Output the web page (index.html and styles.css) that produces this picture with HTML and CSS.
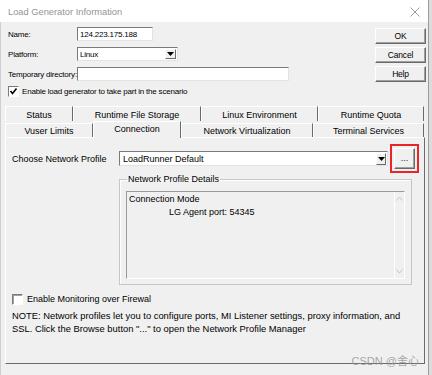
FILE: index.html
```html
<!DOCTYPE html>
<html>
<head>
<meta charset="utf-8">
<link rel="stylesheet" href="styles.css">
</head>
<body>
<div class="screen">
  <div class="win">
    <div class="titlebar">
      <span class="title">Load Generator Information</span>
      <svg class="close" width="10" height="10" viewBox="0 0 10 10"><path d="M0.5 0.5L9.5 9.5M9.5 0.5L0.5 9.5" stroke="#9a9a9a" stroke-width="1" fill="none"/></svg>
    </div>
    <div class="body">
      <div class="top">
        <div class="form">
          <div class="row"><span class="lbl">Name:</span><div class="field f-name">124.223.175.188</div></div>
          <div class="row"><span class="lbl">Platform:</span><div class="field f-plat"><span class="val">Linux</span><span class="ddbtn"><svg width="7" height="4" viewBox="0 0 7 4"><path d="M0 0H7L3.5 4Z" fill="#000"/></svg></span></div></div>
          <div class="row"><span class="lbl">Temporary directory:</span><div class="field f-temp"></div></div>
          <div class="row chkrow"><span class="chk"><svg width="9" height="9" viewBox="0 0 9 9"><path d="M1.5 4L3.5 6.5L7.5 1.5" stroke="#000" stroke-width="1.6" fill="none"/></svg></span><span>Enable load generator to take part in the scenario</span></div>
        </div>
        <div class="btns">
          <div class="btn">OK</div>
          <div class="btn">Cancel</div>
          <div class="btn">Help</div>
        </div>
      </div>
      <div class="tabs">
        <div class="tabrow back">
          <div class="tab t1">Status</div>
          <div class="tab t2">Runtime File Storage</div>
          <div class="tab t3">Linux Environment</div>
          <div class="tab t4">Runtime Quota</div>
        </div>
        <div class="tabrow front">
          <div class="tab t5">Vuser Limits</div>
          <div class="tab t6 sel">Connection</div>
          <div class="tab t7">Network Virtualization</div>
          <div class="tab t8">Terminal Services</div>
        </div>
      </div>
      <div class="panel">
        <div class="choose">
          <span class="clbl">Choose Network Profile</span>
          <div class="combo"><span class="val">LoadRunner Default</span><span class="ddbtn big"><svg width="7" height="4" viewBox="0 0 7 4"><path d="M0 0H7L3.5 4Z" fill="#000"/></svg></span></div>
          <div class="browse-wrap"><div class="browse">...</div></div>
        </div>
        <fieldset class="group">
          <legend>Network Profile Details</legend>
          <div class="details">
            <div class="dtext">
              <div>Connection Mode</div>
              <div class="indent">LG Agent port: 54345</div>
            </div>
            <div class="vscroll">
              <svg width="7" height="5" viewBox="0 0 7 5"><path d="M0.5 4.5L3.5 1L6.5 4.5" stroke="#c4c4c4" fill="none"/></svg>
              <svg width="7" height="5" viewBox="0 0 7 5"><path d="M0.5 0.5L3.5 4L6.5 0.5" stroke="#c4c4c4" fill="none"/></svg>
            </div>
          </div>
        </fieldset>
        <div class="fwrow"><span class="chk2"></span><span>Enable Monitoring over Firewal</span></div>
        <p class="note">NOTE: Network profiles let you to configure ports, MI Listener settings, proxy information, and SSL. Click the Browse button "..." to open the Network Profile Manager</p>
      </div>
    </div>
    <div class="watermark">CSDN @舍心</div>
  </div>
</div>
</body>
</html>
```
FILE: styles.css
```css
html, body { margin: 0; padding: 0; }
body { background: #e6e6e6; width: 432px; height: 375px; overflow: hidden; }
.screen { width: 432px; height: 375px; display: flex; background: #dcdcdc; }
.win { position: relative; width: 428px; height: 375px; background: #f0f0f0; border-right: 1px solid #9c9c9c; display: flex; flex-direction: column; }
.titlebar { height: 22px; background: #fff; display: flex; align-items: center; justify-content: space-between; padding: 1px 8px 0 8px; box-sizing: border-box; flex: none; }
.title { font-family: "Liberation Sans", Arial, sans-serif; font-size: 9.3px; color: #959595; }
.body { flex: 1; border-left: 1px solid #cfcfcf; display: flex; flex-direction: column; font-family: "Liberation Sans", Arial, sans-serif; color: #000; }
.top { height: 84px; display: flex; box-sizing: border-box; padding: 5px 2px 0 7px; font-size: 8px; letter-spacing: -0.2px; }
.form { flex: 1; display: flex; flex-direction: column; gap: 6px; }
.row { display: flex; align-items: center; height: 14px; }
.lbl { width: 69px; white-space: nowrap; }
.field { height: 14px; box-sizing: border-box; background: #fff; border: 1px solid; border-color: #7a7a7a #e3e3e3 #e3e3e3 #7a7a7a; display: flex; align-items: center; padding-left: 2px; }
.f-name { width: 76px; }
.f-plat { width: 101px; justify-content: space-between; padding-right: 1px; }
.f-temp { width: 212px; }
.ddbtn { width: 11px; height: 10px; background: #f0f0f0; border: 1px solid; border-color: #fff #6a6a6a #6a6a6a #fff; box-sizing: border-box; display: flex; align-items: center; justify-content: center; }
.chkrow { height: 12px; margin-top: -2px; gap: 3px; }
.chk { width: 9px; height: 9px; background: #fff; border: 1px solid; border-color: #7a7a7a #fff #fff #7a7a7a; display: flex; align-items: center; justify-content: center; }
.btns { width: 51px; display: flex; flex-direction: column; gap: 3px; padding-top: 1px; }
.btn { height: 16px; box-sizing: border-box; border: 1px solid; border-color: #fff #6a6a6a #6a6a6a #fff; box-shadow: inset -1px -1px 0 #a0a0a0; background: #f0f0f0; display: flex; align-items: center; justify-content: center; font-size: 8.5px; }
.tabs { margin-left: 4px; width: 419px; font-size: 9px; flex: none; }
.tabrow { display: flex; }
.tabrow.back { height: 15px; }
.tabrow.front { height: 16px; align-items: flex-end; }
.tab { box-sizing: border-box; border-left: 1px solid #fff; border-top: 1px solid #fff; border-right: 1px solid #6a6a6a; display: flex; align-items: center; justify-content: center; background: #f0f0f0; white-space: nowrap; height: 15px; }
.back .tab { height: 15px; padding-top: 2px; }
.front .tab { height: 14px; }
.front .tab.sel { height: 17px; margin-bottom: -1px; position: relative; z-index: 2; padding-bottom: 3px; }
.t1 { width: 68px; } .t2 { width: 128px; } .t3 { width: 117px; } .t4 { width: 106px; }
.t5 { width: 88px; } .t6 { width: 88px; } .t7 { width: 132px; } .t8 { width: 111px; }
.panel { margin-left: 4px; width: 420px; height: 227px; box-sizing: border-box; border: 1px solid; border-color: #fff #6a6a6a #6a6a6a #fff; padding: 10px 0 0 6px; font-size: 9px; flex: none; }
.choose { display: flex; align-items: center; height: 21px; }
.clbl { width: 107px; white-space: nowrap; }
.combo { width: 269px; height: 15px; box-sizing: border-box; background: #fff; border: 1px solid; border-color: #7a7a7a #e3e3e3 #e3e3e3 #7a7a7a; display: flex; align-items: center; justify-content: space-between; padding: 0 1px 0 3px; }
.ddbtn.big { width: 10px; height: 12px; }
.browse-wrap { margin-left: 6px; outline: 2px solid #e8252a; outline-offset: 2px; }
.browse { width: 21px; height: 21px; box-sizing: border-box; border: 1px solid; border-color: #fff #6a6a6a #6a6a6a #fff; box-shadow: inset -1px -1px 0 #a0a0a0; display: flex; align-items: center; justify-content: center; font-size: 9px; color: #222; padding-bottom: 2px; }
.group { margin: 5px 0 0 107px; width: 293px; height: 111px; box-sizing: border-box; padding: 8px 6px 8px 6px; border: 1px solid #c6c6c6; box-shadow: inset 1px 1px 0 #fff; }
.group legend { padding: 0 1px; margin-left: 1px; line-height: 11px; }
.details { height: 88px; box-sizing: border-box; border: 1px solid; border-color: #9a9a9a #fff #fff #9a9a9a; display: flex; margin-top: -2px; }
.dtext { flex: 1; padding: 1px 2px; line-height: 13px; }
.indent { padding-left: 40px; }
.vscroll { width: 10px; border-left: 1px solid #fff; display: flex; flex-direction: column; justify-content: space-between; align-items: center; padding: 4px 0 4px; box-sizing: border-box; }
.fwrow { display: flex; align-items: center; gap: 4px; margin-top: 8px; height: 12px; }
.chk2 { width: 9px; height: 9px; background: #fff; border: 1px solid; border-color: #7a7a7a #fff #fff #7a7a7a; box-shadow: inset 1px 1px 0 #a0a0a0; }
.note { margin: 4px 0 0 0; line-height: 13px; width: 396px; font-size: 9.4px; }
.watermark { position: absolute; right: 9px; bottom: 7px; font-family: "Liberation Sans", "Noto Sans CJK SC", sans-serif; font-size: 11px; color: rgba(150,150,150,0.85); }
```
